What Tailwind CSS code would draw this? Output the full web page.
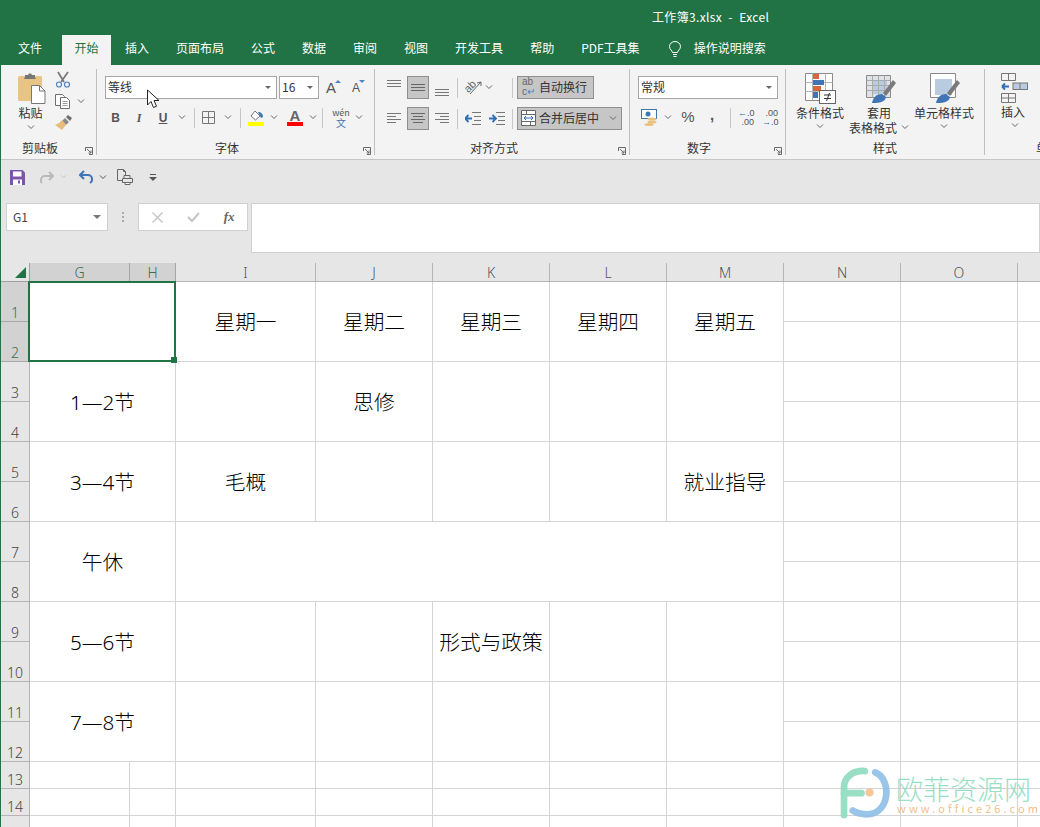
<!doctype html>
<html lang="zh">
<head>
<meta charset="utf-8">
<script src="https://cdn.jsdelivr.net/npm/@tailwindcss/browser@4"></script>
</head>
<body class="m-0 overflow-hidden">
<div class="relative w-[1040px] h-[827px] overflow-hidden flex flex-col bg-[#e6e6e6] border-l border-[#217346] [font-family:'Noto_Sans_CJK_SC',sans-serif] text-[12px] text-[#444]">

  <!-- title -->
  <div class="h-[35px] shrink-0 bg-[#217346] -ml-px text-white flex items-center pl-[652px] pb-[2px] text-[12px] whitespace-pre">
    <span class="tracking-[.35px]">工作簿3.xlsx</span><span class="ml-[6px]">-</span><span class="ml-[7px] tracking-[.3px]">Excel</span>
  </div>

  <!-- tabs -->
  <div class="h-[30px] shrink-0 bg-[#217346] -ml-px text-white flex items-center pl-[18px] pb-[4px] text-[12px] whitespace-nowrap">
    <span>文件</span>
    <span class="ml-[20px] self-stretch -mb-[4px] pb-[4px] w-[49px] bg-[#f3f3f3] text-[#217346] flex items-center justify-center">开始</span>
    <span class="ml-[14px]">插入</span>
    <span class="ml-[27px]">页面布局</span>
    <span class="ml-[27px]">公式</span>
    <span class="ml-[27px]">数据</span>
    <span class="ml-[27px]">审阅</span>
    <span class="ml-[27px]">视图</span>
    <span class="ml-[27px]">开发工具</span>
    <span class="ml-[27px]">帮助</span>
    <span class="ml-[27px]">PDF工具集</span>
    <svg class="ml-[28px] mt-[3px]" width="14" height="17" viewBox="0 0 14 17" fill="none" stroke="#fff"><path d="M4.500 11.500C4.300 9.500 1.500 8.500 1.500 5.500a5.500 5 0 0 1 11 0c0 3-2.800 4-3 6z"/><path d="M5 13.500h4M5.500 15.500h3"/></svg>
    <span class="ml-[12px]">操作说明搜索</span>
  </div>

  <!-- ribbon -->
  <div class="h-[95px] shrink-0 bg-[#f3f3f3] border-b border-[#c6c6c6] flex py-[4px] overflow-hidden">

    <!-- clipboard -->
    <div class="relative w-[96px] shrink-0 h-[86px] border-r border-[#c0c0c0] flex flex-col">
      <div class="h-[71px] flex">
        <div class="w-[49px] ml-[5px] flex flex-col items-center">
          <svg class="mt-[4px] ml-[3px]" width="30" height="31" viewBox="0 0 30 31"><rect x="1" y="3" width="24" height="25" rx="1.500" fill="#e9c585"/><path d="M8 4V2h3l1-1.500h2l1 1.500h3v2l1 2H7z" fill="#777"/><path d="M14.500 12.500h8l5.500 5.500v12.500h-13.500z" fill="#fff" stroke="#777"/><path d="M22.500 12.500v5.500h5.500" fill="none" stroke="#777"/></svg>
          <span class="mt-[1px] text-[12px] leading-[16px] text-[#333]">粘贴</span>
          <svg class="mt-[4px]" width="8" height="5" viewBox="0 0 8 5" fill="none" stroke="#666"><path d="M1 .5l3 3 3-3"/></svg>
        </div>
        <div class="flex flex-col">
          <svg class="mt-[2px]" width="16" height="17" viewBox="0 0 16 17" fill="none"><path d="M3 1l6 10M13 1L6 11" stroke="#7a7a7a" stroke-width="1.800"/><circle cx="4" cy="13.500" r="2.500" stroke="#4f81bd" stroke-width="1.200"/><circle cx="12" cy="13.500" r="2.500" stroke="#4f81bd" stroke-width="1.200"/></svg>
          <div class="mt-[6px] flex items-center">
            <svg width="16" height="15" viewBox="0 0 16 15" fill="#fff" stroke="#6f6f6f"><path d="M.5.500h7l2 2v9h-9z"/><path d="M5.500 3.500h6l3 3v8h-9z"/><path d="M7.500 7.500h5M7.500 9.500h5M7.500 11.500h5" stroke="#9a9a9a"/></svg>
            <svg class="ml-[6px]" width="8" height="5" viewBox="0 0 8 5" fill="none" stroke="#666"><path d="M1 .5l3 3 3-3"/></svg>
          </div>
          <svg class="mt-[6px]" width="17" height="15" viewBox="0 0 17 15"><path d="M10 3l4 4-3 3-4-4z" fill="#8a8a8a"/><path d="M11 2l2-2 4 3-2 3z" fill="#6f6f6f"/><path d="M7 5l4 5-4 5-7-5 2-1 2-1z" fill="#e8bd7c"/></svg>
        </div>
      </div>
      <div class="h-[15px] leading-[15px] pl-[21px] text-[#333]">剪贴板</div>
      <svg class="absolute right-[3px] bottom-[0px]" width="8" height="8" viewBox="0 0 8 8" fill="none" stroke="#6a6a6a"><path d="M.5 4V.5H7.500V7.500H4M2 2l4 4M3.500 6H6V3.500"/></svg>
    </div>

    <!-- font -->
    <div class="relative w-[278px] shrink-0 h-[86px] border-r border-[#c0c0c0] flex flex-col">
      <div class="h-[71px] pt-[7px] pl-[8px] flex flex-col">
        <div class="flex h-[23px] items-center">
          <div class="w-[172px] h-[23px] bg-white border border-[#a6a6a6] flex items-center pl-[2px] pr-[5px] pb-[1px] justify-between text-[#333]"><span>等线</span><span class="w-0 h-0 border-x-[3px] border-x-transparent border-t-[3px] border-t-[#666]"></span></div>
          <div class="ml-[2px] w-[40px] h-[23px] bg-white border border-[#a6a6a6] flex items-center pl-[2px] pr-[5px] pb-[1px] justify-between text-[#333]"><span>16</span><span class="w-0 h-0 border-x-[3px] border-x-transparent border-t-[3px] border-t-[#666]"></span></div>
          <div class="w-[24px] flex justify-center relative text-[15px] leading-[18px] text-[#555] [font-family:'Liberation_Sans',sans-serif]">A<span class="absolute right-[2px] top-[1px] w-0 h-0 border-x-[3px] border-x-transparent border-b-[3px] border-b-[#4f81bd]"></span></div>
          <div class="w-[26px] flex justify-center relative text-[12px] leading-[18px] text-[#555] [font-family:'Liberation_Sans',sans-serif]">A<span class="absolute right-[4px] top-[1px] w-0 h-0 border-x-[3px] border-x-transparent border-t-[3px] border-t-[#4f81bd]"></span></div>
        </div>
        <div class="mt-[7px] -ml-[1px] flex h-[23px] items-center text-[#555]">
          <span class="w-[23px] text-center font-bold text-[12px] [font-family:'Liberation_Sans',sans-serif]">B</span>
          <span class="w-[24px] text-center italic font-bold text-[12px] [font-family:'Liberation_Serif',serif]">I</span>
          <span class="w-[24px] text-center font-bold text-[12px] underline [font-family:'Liberation_Sans',sans-serif]">U</span>
          <span class="w-[14px] flex justify-center"><svg width="8" height="5" viewBox="0 0 8 5" fill="none" stroke="#666"><path d="M1 .5l3 3 3-3"/></svg></span>
          <span class="w-[10px] flex justify-center"><span class="w-px h-[20px] bg-[#c6c6c6]"></span></span>
          <span class="w-[20px] flex justify-center"><svg width="14" height="14" viewBox="0 0 14 14" fill="none" stroke="#777"><path d="M.5.500h12v12H.5zM6.500.500v12M.5 6.500h12"/></svg></span>
          <span class="w-[17px] flex justify-center"><svg width="8" height="5" viewBox="0 0 8 5" fill="none" stroke="#666"><path d="M1 .5l3 3 3-3"/></svg></span>
          <span class="w-[9px] flex justify-center"><span class="w-px h-[20px] bg-[#c6c6c6]"></span></span>
          <span class="w-[22px] flex justify-center"><svg width="16" height="16" viewBox="0 0 16 16"><path d="M7 1l5 5-4.500 4-4.500-4z" fill="#fff" stroke="#777"/><path d="M10 2c3 0 5 2 5 5l-2 1z" fill="#3f74b5"/><rect x="0" y="12" width="16" height="4" fill="#ffff00"/></svg></span>
          <span class="w-[14px] flex justify-center"><svg width="8" height="5" viewBox="0 0 8 5" fill="none" stroke="#666"><path d="M1 .5l3 3 3-3"/></svg></span>
          <span class="w-[3px]"></span>
          <span class="w-[22px] flex flex-col items-center"><span class="text-[15px] leading-[13px] font-bold text-[#666] [font-family:'Liberation_Sans',sans-serif]">A</span><span class="w-[16px] h-[4px] bg-[#ff0000]"></span></span>
          <span class="w-[14px] flex justify-center"><svg width="8" height="5" viewBox="0 0 8 5" fill="none" stroke="#666"><path d="M1 .5l3 3 3-3"/></svg></span>
          <span class="w-[5px] flex justify-center"><span class="w-px h-[20px] bg-[#c6c6c6]"></span></span>
          <span class="w-[22px] ml-[5px] flex flex-col items-center leading-[10px] text-[9px] text-[#555]"><span>wén</span><span class="text-[10px] text-[#3f74b5]">文</span></span>
          <span class="w-[14px] flex justify-center"><svg width="8" height="5" viewBox="0 0 8 5" fill="none" stroke="#666"><path d="M1 .5l3 3 3-3"/></svg></span>
        </div>
      </div>
      <div class="h-[15px] leading-[15px] pl-[118px] text-[#333]">字体</div>
      <svg class="absolute right-[3px] bottom-[0px]" width="8" height="8" viewBox="0 0 8 8" fill="none" stroke="#6a6a6a"><path d="M.5 4V.5H7.500V7.500H4M2 2l4 4M3.500 6H6V3.500"/></svg>
    </div>

    <!-- alignment -->
    <div class="relative w-[255px] shrink-0 h-[86px] border-r border-[#c0c0c0] flex flex-col">
      <div class="h-[71px] pt-[7px] pl-[12px] flex flex-col">
        <div class="flex h-[23px] items-center">
          <svg width="14" height="23" viewBox="0 0 14 23" stroke="#777"><path d="M0 4.500h14M0 7.500h14M0 10.500h14"/></svg>
          <span class="ml-[6px] w-[22px] h-[23px] bg-[#c6c6c6] border border-[#8f8f8f] flex items-center justify-center"><svg width="14" height="8" viewBox="0 0 14 8" stroke="#666"><path d="M0 .5h14M0 3.500h14M0 6.500h14"/></svg></span>
          <svg class="ml-[6px]" width="14" height="23" viewBox="0 0 14 23" stroke="#777"><path d="M0 13.500h14M0 16.500h14M0 19.500h14"/></svg>
          <span class="ml-[8px] w-px h-[20px] bg-[#c6c6c6]"></span>
          <span class="ml-[7px] w-[17px] h-[17px] relative flex items-center justify-center"><span class="-rotate-45 -translate-x-[3px] -translate-y-[1px] text-[11px] leading-[11px] text-[#666] [font-family:'Liberation_Sans',sans-serif]">ab</span><svg class="absolute left-0 top-0" width="17" height="17" viewBox="0 0 17 17" fill="none" stroke="#666"><path d="M5 15L16 3M16 3l-4 1M16 3v4"/></svg></span>
          <svg class="ml-[3px]" width="8" height="5" viewBox="0 0 8 5" fill="none" stroke="#666"><path d="M1 .5l3 3 3-3"/></svg>
          <span class="ml-[19px] w-px h-[20px] bg-[#c6c6c6]"></span>
          <span class="ml-[4px] w-[77px] h-[23px] bg-[#c6c6c6] border border-[#8f8f8f] flex items-center pl-[4px] pb-[1px] text-[#333]"><span class="w-[13px] flex flex-col text-[10px] leading-[10px] text-[#666] mr-[4px] [font-family:'Liberation_Sans',sans-serif]"><span>ab</span><span>c<span class="text-[#4f81bd]">↵</span></span></span>自动换行</span>
        </div>
        <div class="mt-[8px] flex h-[23px] items-center">
          <svg width="14" height="23" viewBox="0 0 14 23" stroke="#777"><path d="M0 6.500h14M0 9.500h9M0 12.500h14M0 15.500h9"/></svg>
          <span class="ml-[6px] w-[22px] h-[23px] bg-[#c6c6c6] border border-[#8f8f8f] flex items-center justify-center"><svg width="14" height="11" viewBox="0 0 14 11" stroke="#666"><path d="M0 .5h14M2 3.500h10M0 6.500h14M2 9.500h10"/></svg></span>
          <svg class="ml-[6px]" width="14" height="23" viewBox="0 0 14 23" stroke="#777"><path d="M0 6.500h14M5 9.500h9M0 12.500h14M5 15.500h9"/></svg>
          <span class="ml-[8px] w-px h-[20px] bg-[#c6c6c6]"></span>
          <svg class="ml-[7px]" width="16" height="13" viewBox="0 0 16 13" fill="none" stroke="#777"><path d="M7 .5h9M9 4.500h7M9 8.500h7M7 12.500h9"/><path d="M0 6.500h7M3.500 3L0 6.500 3.500 10" stroke="#2f6eb5" stroke-width="1.800"/></svg>
          <svg class="ml-[8px]" width="16" height="13" viewBox="0 0 16 13" fill="none" stroke="#777"><path d="M7 .5h9M9 4.500h7M9 8.500h7M7 12.500h9"/><path d="M0 6.500h7M3.500 3L7 6.500 3.500 10" stroke="#2f6eb5" stroke-width="1.800"/></svg>
          <span class="ml-[7px] w-px h-[20px] bg-[#c6c6c6]"></span>
          <span class="ml-[4px] w-[105px] h-[23px] bg-[#c6c6c6] border border-[#8f8f8f] flex items-center pl-[3px] pb-[1px] text-[#333]"><svg class="mr-[3px]" width="15" height="16" viewBox="0 0 15 16" fill="#fff" stroke="#666"><path d="M.5.500h14v15H.5z"/><path d="M.5 4.500h14M.5 11.500h14M5.500.5v4M9.500 11.500v4"/><path d="M3 8h9M3 8l2-2M3 8l2 2M12 8l-2-2M12 8l-2 2" stroke="#2f6eb5"/></svg>合并后居中<svg class="ml-[10px]" width="8" height="5" viewBox="0 0 8 5" fill="none" stroke="#666"><path d="M1 .5l3 3 3-3"/></svg></span>
        </div>
      </div>
      <div class="h-[15px] leading-[15px] pl-[95px] text-[#333]">对齐方式</div>
      <svg class="absolute right-[3px] bottom-[0px]" width="8" height="8" viewBox="0 0 8 8" fill="none" stroke="#6a6a6a"><path d="M.5 4V.5H7.500V7.500H4M2 2l4 4M3.500 6H6V3.500"/></svg>
    </div>

    <!-- number -->
    <div class="relative w-[156px] shrink-0 h-[86px] border-r border-[#c0c0c0] flex flex-col">
      <div class="h-[71px] pt-[7px] pl-[8px] flex flex-col">
        <div class="w-[140px] h-[23px] bg-white border border-[#a6a6a6] flex items-center pl-[2px] pr-[5px] pb-[1px] justify-between text-[#333]"><span>常规</span><span class="w-0 h-0 border-x-[3px] border-x-transparent border-t-[3px] border-t-[#666]"></span></div>
        <div class="mt-[7px] flex h-[23px] items-center">
          <svg class="ml-[3px]" width="17" height="17" viewBox="0 0 17 17"><rect x=".5" y=".5" width="15" height="9" fill="#fff" stroke="#3f74b5"/><circle cx="7" cy="5" r="2.500" fill="#3f74b5"/><ellipse cx="11" cy="10" rx="4.500" ry="1.500" fill="#e8c27e"/><ellipse cx="11" cy="13" rx="4.500" ry="1.500" fill="#e8c27e"/><ellipse cx="8" cy="15.500" rx="4.500" ry="1.500" fill="#e8c27e"/></svg>
          <svg class="ml-[6px]" width="8" height="5" viewBox="0 0 8 5" fill="none" stroke="#666"><path d="M1 .5l3 3 3-3"/></svg>
          <span class="ml-[5px] w-[22px] text-center text-[15px] text-[#555] [font-family:'Liberation_Sans',sans-serif]">%</span>
          <span class="ml-[6px] w-[14px] text-center text-[15px] font-bold text-[#555] [font-family:'Liberation_Sans',sans-serif] -mt-[4px]">,</span>
          <span class="ml-[11px] w-px h-[20px] bg-[#c6c6c6]"></span>
          <span class="ml-[7px] w-[16px] flex flex-col text-[9px] leading-[9px] text-[#555] text-right [font-family:'Liberation_Sans',sans-serif]"><span><span class="text-[#2f6eb5]">←</span>.0</span><span>.00</span></span>
          <span class="ml-[8px] w-[16px] flex flex-col text-[9px] leading-[9px] text-[#555] text-right [font-family:'Liberation_Sans',sans-serif]"><span>.00</span><span><span class="text-[#2f6eb5]">→</span>.0</span></span>
        </div>
      </div>
      <div class="h-[15px] leading-[15px] pl-[57px] text-[#333]">数字</div>
      <svg class="absolute right-[3px] bottom-[0px]" width="8" height="8" viewBox="0 0 8 8" fill="none" stroke="#6a6a6a"><path d="M.5 4V.5H7.500V7.500H4M2 2l4 4M3.500 6H6V3.500"/></svg>
    </div>

    <!-- styles -->
    <div class="w-[199px] shrink-0 h-[86px] border-r border-[#c0c0c0] flex flex-col">
      <div class="h-[71px] pl-[10px] flex items-start text-[#333] leading-[15px]">
        <div class="w-[48px] flex flex-col items-center">
          <svg class="mt-[4px]" width="31" height="31" viewBox="0 0 31 31"><path d="M.5.500h27v27H.5z" fill="#fff" stroke="#8a8a8a"/><path d="M.5 9.500h27M.5 18.500h27M7.500.5v27M20.500.5v27" stroke="#b5b5b5" fill="none"/><rect x="8" y="1" width="6" height="5" fill="#d9653e"/><rect x="8" y="7" width="11" height="5" fill="#3f74b5"/><rect x="8" y="13" width="8" height="5" fill="#d9653e"/><rect x="8" y="19" width="5" height="6" fill="#3f74b5"/><rect x="14.500" y="17.500" width="16" height="13" fill="#fff" stroke="#666"/><path d="M19 22h7M19 25.500h7M24.500 20l-3 8" stroke="#333" fill="none"/></svg>
          <span class="mt-[1px]">条件格式</span>
          <svg class="mt-[4px]" width="8" height="5" viewBox="0 0 8 5" fill="none" stroke="#666"><path d="M1 .5l3 3 3-3"/></svg>
        </div>
        <div class="ml-[5px] w-[60px] flex flex-col items-center">
          <svg class="mt-[6px] ml-[3px]" width="30" height="29" viewBox="0 0 30 29"><path d="M.5.500h24v22H.5z" fill="#dfe3e8" stroke="#8a8a8a"/><rect x="7" y="6" width="14" height="13" fill="#b9cbe0"/><path d="M.5 5.500h24M.5 10.500h24M.5 15.500h24M6.500.5v22M12.500.5v22M18.500.5v22" stroke="#aaa" fill="none"/><path d="M17 18L27 5l3 3-10 13z" fill="#7a7a7a"/><path d="M6 28c1-5 4-9 10-9l4 3c-1 4-4 6-14 6z" fill="#3f74b5"/></svg>
          <span class="mt-[1px]">套用</span>
          <div class="flex items-center"><span>表格格式</span><svg class="ml-[4px]" width="8" height="5" viewBox="0 0 8 5" fill="none" stroke="#666"><path d="M1 .5l3 3 3-3"/></svg></div>
        </div>
        <div class="ml-[5px] w-[60px] flex flex-col items-center">
          <svg class="mt-[4px] ml-[2px]" width="30" height="31" viewBox="0 0 30 31"><path d="M.5.500h25v24H.5z" fill="#fff" stroke="#8a8a8a"/><rect x="5" y="6" width="17" height="16" fill="#b9cbe0"/><path d="M17 20L27 7l3 3-10 13z" fill="#7a7a7a"/><path d="M6 30c1-5 4-9 10-9l4 3c-1 4-4 6-14 6z" fill="#3f74b5"/></svg>
          <span class="mt-[1px]">单元格样式</span>
          <svg class="mt-[4px]" width="8" height="5" viewBox="0 0 8 5" fill="none" stroke="#666"><path d="M1 .5l3 3 3-3"/></svg>
        </div>
      </div>
      <div class="h-[15px] leading-[15px] pl-[87px] text-[#333]">样式</div>
    </div>

    <!-- cells -->
    <div class="flex-1 h-[86px] flex flex-col overflow-hidden">
      <div class="h-[71px] pl-[16px] flex flex-col items-start text-[#333] leading-[15px]">
        <svg class="mt-[4px]" width="27" height="30" viewBox="0 0 27 30" fill="none" stroke="#777"><path d="M.5.500h14v7H.5zM7.500.5v7M.5 20.500h14v9H.5zM.5 25h14M7.500 20.500v9"/><rect x="12" y="10" width="14.500" height="6.500" fill="#b9cbe0"/><path d="M19 10v6.500"/><path d="M1 13.500h7M1 13.500l3-3M1 13.500l3 3" stroke="#2f6eb5" stroke-width="1.800"/></svg>
        <span class="mt-[1px]">插入</span>
        <svg class="mt-[4px] ml-[10px]" width="8" height="5" viewBox="0 0 8 5" fill="none" stroke="#666"><path d="M1 .5l3 3 3-3"/></svg>
      </div>
      <div class="h-[15px] leading-[15px] pl-[51px] text-[#333] whitespace-nowrap">单元格</div>
    </div>
  </div>

  <!-- quick access -->
  <div class="h-[34px] shrink-0 flex items-center pl-[9px]">
    <svg width="15" height="15" viewBox="0 0 15 15"><path d="M0 0h12.500L15 2.500V15H0z" fill="#7d55a8"/><rect x="3" y="1.500" width="8.500" height="5" fill="#fff"/><rect x="3" y="9.500" width="9" height="5.500" fill="#fff"/><rect x="8" y="10.500" width="2" height="3" fill="#7d55a8"/></svg>
    <svg class="ml-[14px]" width="15" height="13" viewBox="0 0 15 13" fill="none" stroke="#b9b9b9" stroke-width="2"><path d="M14 5H6a4 4 0 0 0-4 4 4 3 0 0 0 1 3"/><path d="M10 1l4 4-4 4"/></svg>
    <svg class="ml-[6px]" width="7" height="4" viewBox="0 0 8 5" fill="none" stroke="#bbb"><path d="M1 .5l3 3 3-3"/></svg>
    <svg class="ml-[12px]" width="15" height="14" viewBox="0 0 15 14" fill="none" stroke="#3f74b5" stroke-width="2"><path d="M1 5h8a4 4 0 0 1 4 4 4 4 0 0 1-2 4"/><path d="M5 1L1 5l4 4"/></svg>
    <svg class="ml-[5px]" width="8" height="5" viewBox="0 0 8 5" fill="none" stroke="#555"><path d="M1 .5l3 3 3-3"/></svg>
    <svg class="ml-[10px]" width="16" height="16" viewBox="0 0 16 16" fill="#e6e6e6" stroke="#666"><path d="M.5.500h6l2 2v9H.5zM6.500.5v2h2"/><path d="M7 6.500h6v5.500H7z"/><path d="M5.500 9.500h10v4h-10z"/><path d="M8 13.500h5v2H8z" fill="#fff"/></svg>
    <svg class="ml-[16px]" width="8" height="7" viewBox="0 0 8 7"><path d="M1 0h6v1H1z" fill="#555"/><path d="M0 3h8L4 7z" fill="#555"/></svg>
  </div>

  <!-- formula bar -->
  <div class="h-[69px] shrink-0 pt-[9px] pl-[5px] flex items-start">
    <div class="w-[102px] h-[28px] bg-white border border-[#d0d0d0] flex items-center justify-between pl-[6px] pr-[6px] text-[#444]"><span>G1</span><span class="w-0 h-0 border-x-[4px] border-x-transparent border-t-[4px] border-t-[#777]"></span></div>
    <div class="w-[30px] h-[28px] flex flex-col items-center justify-center gap-[2px]"><span class="w-[2px] h-[2px] bg-[#aaa]"></span><span class="w-[2px] h-[2px] bg-[#aaa]"></span><span class="w-[2px] h-[2px] bg-[#aaa]"></span></div>
    <div class="w-[110px] h-[28px] bg-white border border-[#d0d0d0] flex items-center">
      <span class="w-[36px] ml-[1px] flex justify-center"><svg width="11" height="11" viewBox="0 0 11 11" stroke="#c4c4c4" stroke-width="1.400"><path d="M.5.500l10 10M10.500.5l-10 10"/></svg></span>
      <span class="w-[36px] flex justify-center"><svg width="13" height="10" viewBox="0 0 13 10" fill="none" stroke="#c4c4c4" stroke-width="2"><path d="M1 5l4 4 7-8"/></svg></span>
      <span class="w-[36px] text-center italic font-bold text-[13px] text-[#666] [font-family:'Liberation_Serif',serif]">fx</span>
    </div>
    <div class="ml-[3px] flex-1 h-[50px] bg-white border border-[#d0d0d0]"></div>
  </div>

  <!-- sheet -->
  <div class="flex-1 grid grid-cols-[29px_100px_46px_140px_117px_117px_117px_117px_117px_117px_1fr] grid-rows-[19px_repeat(12,40px)_27px_27px_1fr] bg-white text-[20.7px] font-light text-black [font-family:'Noto_Sans','Noto_Sans_CJK_SC',sans-serif]">
    <!-- header -->
    <div class="bg-[#e6e6e6] border-b border-r border-[#a0a0a0] flex items-end justify-end pr-[3px] pb-[3px]"><span class="w-0 h-0 border-l-[11px] border-l-transparent border-b-[11px] border-b-[#217346]"></span></div>
    <div class="bg-[#d2d2d2] border-r border-b border-[#a8a8a8] text-[14px] leading-[20px] text-center text-[#3c6e55]">G</div>
    <div class="bg-[#d2d2d2] border-r border-b border-[#a8a8a8] text-[14px] leading-[20px] text-center text-[#3c6e55]">H</div>
    <div class="bg-[#e6e6e6] border-r border-b border-[#b5b5b5] text-[14px] leading-[20px] text-center text-[#555]">I</div>
    <div class="bg-[#e6e6e6] border-r border-b border-[#b5b5b5] text-[14px] leading-[20px] text-center text-[#555]">J</div>
    <div class="bg-[#e6e6e6] border-r border-b border-[#b5b5b5] text-[14px] leading-[20px] text-center text-[#555]">K</div>
    <div class="bg-[#e6e6e6] border-r border-b border-[#b5b5b5] text-[14px] leading-[20px] text-center text-[#555]">L</div>
    <div class="bg-[#e6e6e6] border-r border-b border-[#b5b5b5] text-[14px] leading-[20px] text-center text-[#555]">M</div>
    <div class="bg-[#e6e6e6] border-r border-b border-[#b5b5b5] text-[14px] leading-[20px] text-center text-[#555]">N</div>
    <div class="bg-[#e6e6e6] border-r border-b border-[#b5b5b5] text-[14px] leading-[20px] text-center text-[#555]">O</div>
    <div class="bg-[#e6e6e6] border-b border-[#b5b5b5]"></div>

    <!-- rows 1-2 -->
    <div class="bg-[#d2d2d2] border-r border-b border-[#a8a8a8] flex items-end justify-center text-[14px] leading-[16px] text-[#3c6e55]">1</div>
    <div class="relative col-span-2 row-span-2 border-r border-b border-[#d4d4d4]"><div class="absolute -left-[2px] -top-[1px] -right-[1px] -bottom-[1px] border-2 border-[#217346]"><span class="absolute -right-[3px] -bottom-[3px] w-[6px] h-[6px] bg-[#217346]"></span></div></div>
    <div class="row-span-2 border-r border-b border-[#d4d4d4] flex items-center justify-center pt-[2px]">星期一</div>
    <div class="row-span-2 border-r border-b border-[#d4d4d4] flex items-center justify-center pt-[2px]">星期二</div>
    <div class="row-span-2 border-r border-b border-[#d4d4d4] flex items-center justify-center pt-[2px]">星期三</div>
    <div class="row-span-2 border-r border-b border-[#d4d4d4] flex items-center justify-center pt-[2px]">星期四</div>
    <div class="row-span-2 border-r border-b border-[#d4d4d4] flex items-center justify-center pt-[2px]">星期五</div>
    <div class="border-r border-b border-[#d4d4d4]"></div><div class="border-r border-b border-[#d4d4d4]"></div><div class="border-b border-[#d4d4d4]"></div>
    <div class="bg-[#d2d2d2] border-r border-b border-[#a8a8a8] flex items-end justify-center text-[14px] leading-[16px] text-[#3c6e55]">2</div>
    <div class="border-r border-b border-[#d4d4d4]"></div><div class="border-r border-b border-[#d4d4d4]"></div><div class="border-b border-[#d4d4d4]"></div>

    <!-- rows 3-4 -->
    <div class="bg-[#e6e6e6] border-r border-b border-[#b5b5b5] flex items-end justify-center text-[14px] leading-[16px] text-[#444]">3</div>
    <div class="col-span-2 row-span-2 border-r border-b border-[#d4d4d4] flex items-center justify-center pt-[2px]">1—2节</div>
    <div class="row-span-2 border-r border-b border-[#d4d4d4]"></div>
    <div class="row-span-2 border-r border-b border-[#d4d4d4] flex items-center justify-center pt-[2px]">思修</div>
    <div class="row-span-2 border-r border-b border-[#d4d4d4]"></div>
    <div class="row-span-2 border-r border-b border-[#d4d4d4]"></div>
    <div class="row-span-2 border-r border-b border-[#d4d4d4]"></div>
    <div class="border-r border-b border-[#d4d4d4]"></div><div class="border-r border-b border-[#d4d4d4]"></div><div class="border-b border-[#d4d4d4]"></div>
    <div class="bg-[#e6e6e6] border-r border-b border-[#b5b5b5] flex items-end justify-center text-[14px] leading-[16px] text-[#444]">4</div>
    <div class="border-r border-b border-[#d4d4d4]"></div><div class="border-r border-b border-[#d4d4d4]"></div><div class="border-b border-[#d4d4d4]"></div>

    <!-- rows 5-6 -->
    <div class="bg-[#e6e6e6] border-r border-b border-[#b5b5b5] flex items-end justify-center text-[14px] leading-[16px] text-[#444]">5</div>
    <div class="col-span-2 row-span-2 border-r border-b border-[#d4d4d4] flex items-center justify-center pt-[2px]">3—4节</div>
    <div class="row-span-2 border-r border-b border-[#d4d4d4] flex items-center justify-center pt-[2px]">毛概</div>
    <div class="row-span-2 border-r border-b border-[#d4d4d4]"></div>
    <div class="row-span-2 border-r border-b border-[#d4d4d4]"></div>
    <div class="row-span-2 border-r border-b border-[#d4d4d4]"></div>
    <div class="row-span-2 border-r border-b border-[#d4d4d4] flex items-center justify-center pt-[2px]">就业指导</div>
    <div class="border-r border-b border-[#d4d4d4]"></div><div class="border-r border-b border-[#d4d4d4]"></div><div class="border-b border-[#d4d4d4]"></div>
    <div class="bg-[#e6e6e6] border-r border-b border-[#b5b5b5] flex items-end justify-center text-[14px] leading-[16px] text-[#444]">6</div>
    <div class="border-r border-b border-[#d4d4d4]"></div><div class="border-r border-b border-[#d4d4d4]"></div><div class="border-b border-[#d4d4d4]"></div>

    <!-- rows 7-8 -->
    <div class="bg-[#e6e6e6] border-r border-b border-[#b5b5b5] flex items-end justify-center text-[14px] leading-[16px] text-[#444]">7</div>
    <div class="col-span-2 row-span-2 border-r border-b border-[#d4d4d4] flex items-center justify-center pt-[3px]">午休</div>
    <div class="col-span-5 row-span-2 border-r border-b border-[#d4d4d4]"></div>
    <div class="border-r border-b border-[#d4d4d4]"></div><div class="border-r border-b border-[#d4d4d4]"></div><div class="border-b border-[#d4d4d4]"></div>
    <div class="bg-[#e6e6e6] border-r border-b border-[#b5b5b5] flex items-end justify-center text-[14px] leading-[16px] text-[#444]">8</div>
    <div class="border-r border-b border-[#d4d4d4]"></div><div class="border-r border-b border-[#d4d4d4]"></div><div class="border-b border-[#d4d4d4]"></div>

    <!-- rows 9-10 -->
    <div class="bg-[#e6e6e6] border-r border-b border-[#b5b5b5] flex items-end justify-center text-[14px] leading-[16px] text-[#444]">9</div>
    <div class="col-span-2 row-span-2 border-r border-b border-[#d4d4d4] flex items-center justify-center pt-[2px]">5—6节</div>
    <div class="row-span-2 border-r border-b border-[#d4d4d4]"></div>
    <div class="row-span-2 border-r border-b border-[#d4d4d4]"></div>
    <div class="row-span-2 border-r border-b border-[#d4d4d4] flex items-center justify-center pt-[2px]">形式与政策</div>
    <div class="row-span-2 border-r border-b border-[#d4d4d4]"></div>
    <div class="row-span-2 border-r border-b border-[#d4d4d4]"></div>
    <div class="border-r border-b border-[#d4d4d4]"></div><div class="border-r border-b border-[#d4d4d4]"></div><div class="border-b border-[#d4d4d4]"></div>
    <div class="bg-[#e6e6e6] border-r border-b border-[#b5b5b5] flex items-end justify-center text-[14px] leading-[16px] text-[#444]">10</div>
    <div class="border-r border-b border-[#d4d4d4]"></div><div class="border-r border-b border-[#d4d4d4]"></div><div class="border-b border-[#d4d4d4]"></div>

    <!-- rows 11-12 -->
    <div class="bg-[#e6e6e6] border-r border-b border-[#b5b5b5] flex items-end justify-center text-[14px] leading-[16px] text-[#444]">11</div>
    <div class="col-span-2 row-span-2 border-r border-b border-[#d4d4d4] flex items-center justify-center pt-[2px]">7—8节</div>
    <div class="row-span-2 border-r border-b border-[#d4d4d4]"></div>
    <div class="row-span-2 border-r border-b border-[#d4d4d4]"></div>
    <div class="row-span-2 border-r border-b border-[#d4d4d4]"></div>
    <div class="row-span-2 border-r border-b border-[#d4d4d4]"></div>
    <div class="row-span-2 border-r border-b border-[#d4d4d4]"></div>
    <div class="border-r border-b border-[#d4d4d4]"></div><div class="border-r border-b border-[#d4d4d4]"></div><div class="border-b border-[#d4d4d4]"></div>
    <div class="bg-[#e6e6e6] border-r border-b border-[#b5b5b5] flex items-end justify-center text-[14px] leading-[16px] text-[#444]">12</div>
    <div class="border-r border-b border-[#d4d4d4]"></div><div class="border-r border-b border-[#d4d4d4]"></div><div class="border-b border-[#d4d4d4]"></div>

    <!-- row 13 -->
    <div class="bg-[#e6e6e6] border-r border-b border-[#b5b5b5] flex items-end justify-center text-[14px] leading-[16px] text-[#444]">13</div>
    <div class="border-r border-b border-[#d4d4d4]"></div><div class="border-r border-b border-[#d4d4d4]"></div><div class="border-r border-b border-[#d4d4d4]"></div><div class="border-r border-b border-[#d4d4d4]"></div><div class="border-r border-b border-[#d4d4d4]"></div><div class="border-r border-b border-[#d4d4d4]"></div><div class="border-r border-b border-[#d4d4d4]"></div><div class="border-r border-b border-[#d4d4d4]"></div><div class="border-r border-b border-[#d4d4d4]"></div><div class="border-b border-[#d4d4d4]"></div>
    <!-- row 14 -->
    <div class="bg-[#e6e6e6] border-r border-b border-[#b5b5b5] flex items-end justify-center text-[14px] leading-[16px] text-[#444]">14</div>
    <div class="border-r border-b border-[#d4d4d4]"></div><div class="border-r border-b border-[#d4d4d4]"></div><div class="border-r border-b border-[#d4d4d4]"></div><div class="border-r border-b border-[#d4d4d4]"></div><div class="border-r border-b border-[#d4d4d4]"></div><div class="border-r border-b border-[#d4d4d4]"></div><div class="border-r border-b border-[#d4d4d4]"></div><div class="border-r border-b border-[#d4d4d4]"></div><div class="border-r border-b border-[#d4d4d4]"></div><div class="border-b border-[#d4d4d4]"></div>
    <!-- row 15 -->
    <div class="bg-[#e6e6e6] border-r border-[#b5b5b5]"></div>
    <div class="border-r border-[#d4d4d4]"></div><div class="border-r border-[#d4d4d4]"></div><div class="border-r border-[#d4d4d4]"></div><div class="border-r border-[#d4d4d4]"></div><div class="border-r border-[#d4d4d4]"></div><div class="border-r border-[#d4d4d4]"></div><div class="border-r border-[#d4d4d4]"></div><div class="border-r border-[#d4d4d4]"></div><div class="border-r border-[#d4d4d4]"></div><div></div>
  </div>

  <!-- mouse cursor -->
  <svg class="absolute left-[145px] top-[89px]" width="15" height="20" viewBox="0 0 15 20"><path d="M1.500 1v15l3.500-3.500 2.500 6 3-1.300-2.500-5.700h5z" fill="#fff" stroke="#222"/></svg>

  <!-- watermark -->
  <svg class="absolute left-[839px] top-[767px] opacity-90" width="52" height="52" viewBox="60 52 155 155" fill="none" stroke-width="20" stroke-linecap="round"><path d="M72 195V112c0-28 24-50 62-48" stroke="#8fdcc0"/><path d="M72 130h52" stroke="#8fdcc0"/><path d="M165 68c50 20 45 125-25 125-17 0-32-4-42-11" stroke="#8fbfe6"/><circle cx="148" cy="128" r="12" fill="#f5c08c" stroke="none"/></svg>
  <div class="absolute left-[895px] top-[775px] text-[27px] font-light leading-[28px] text-[#8fdcc0] opacity-90 whitespace-nowrap">欧菲资源网</div>
  <div class="absolute left-[896px] top-[803px] text-[11px] leading-[11px] tracking-[3.100px] text-[#f0c088] whitespace-nowrap">www.office26.com</div>
</div>
</body>
</html>
